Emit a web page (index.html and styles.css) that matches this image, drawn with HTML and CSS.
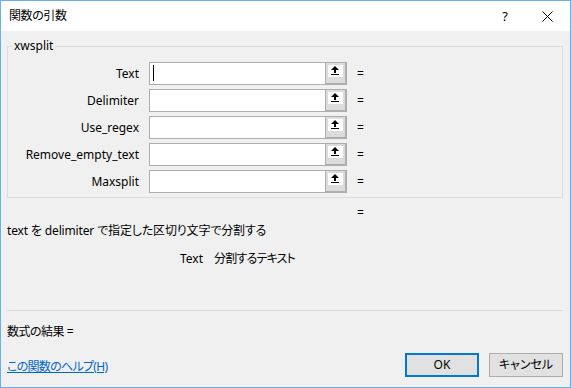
FILE: index.html
```html
<!DOCTYPE html>
<html lang="ja">
<head>
<meta charset="utf-8">
<title>関数の引数</title>
<link rel="stylesheet" href="styles.css">
</head>
<body>
<div class="window">
  <div class="titlebar">
    <span class="title">関数の引数</span>
    <span class="caption-btn help">?</span>
    <span class="caption-btn close">
      <svg width="11" height="11" viewBox="0 0 11 11"><path d="M0.5 0.5 L10.5 10.5 M10.5 0.5 L0.5 10.5" stroke="#000" stroke-width="1" fill="none"/></svg>
    </span>
  </div>
  <div class="content">
    <fieldset class="group">
      <legend class="group-title">xwsplit</legend>
      <div class="args">
        <span class="arg-label">Text</span>
        <div class="field"><span class="input"><span class="caret"></span></span><span class="pick"><span class="pick-face"><svg width="15" height="12" viewBox="0 0 15 12"><polygon points="7,1 11,5 3,5" fill="#000"/><rect x="6" y="5" width="2" height="3" fill="#000"/><rect x="3" y="9" width="8" height="1" fill="#000"/></svg></span></span></div>
        <span class="eq">=</span>

        <span class="arg-label">Delimiter</span>
        <div class="field"><span class="input"></span><span class="pick"><span class="pick-face"><svg width="15" height="12" viewBox="0 0 15 12"><polygon points="7,1 11,5 3,5" fill="#000"/><rect x="6" y="5" width="2" height="3" fill="#000"/><rect x="3" y="9" width="8" height="1" fill="#000"/></svg></span></span></div>
        <span class="eq">=</span>

        <span class="arg-label">Use_regex</span>
        <div class="field"><span class="input"></span><span class="pick"><span class="pick-face"><svg width="15" height="12" viewBox="0 0 15 12"><polygon points="7,1 11,5 3,5" fill="#000"/><rect x="6" y="5" width="2" height="3" fill="#000"/><rect x="3" y="9" width="8" height="1" fill="#000"/></svg></span></span></div>
        <span class="eq">=</span>

        <span class="arg-label">Remove_empty_text</span>
        <div class="field"><span class="input"></span><span class="pick"><span class="pick-face"><svg width="15" height="12" viewBox="0 0 15 12"><polygon points="7,1 11,5 3,5" fill="#000"/><rect x="6" y="5" width="2" height="3" fill="#000"/><rect x="3" y="9" width="8" height="1" fill="#000"/></svg></span></span></div>
        <span class="eq">=</span>

        <span class="arg-label">Maxsplit</span>
        <div class="field"><span class="input"></span><span class="pick"><span class="pick-face"><svg width="15" height="12" viewBox="0 0 15 12"><polygon points="7,1 11,5 3,5" fill="#000"/><rect x="6" y="5" width="2" height="3" fill="#000"/><rect x="3" y="9" width="8" height="1" fill="#000"/></svg></span></span></div>
        <span class="eq">=</span>
      </div>
    </fieldset>
    <div class="result-eq">=</div>
    <p class="desc">text を delimiter で指定した区切り文字で分割する</p>
    <div class="argdesc"><span class="argname">Text</span><span class="argtext">分割するテキスト</span></div>
    <hr class="sep">
    <div class="formula">数式の結果 =</div>
    <div class="footer">
      <a class="help-link" href="#">この関数のヘルプ(H)</a>
      <div class="buttons">
        <button class="btn primary" type="button">OK</button>
        <button class="btn" type="button">キャンセル</button>
      </div>
    </div>
  </div>
</div>
</body>
</html>
```

FILE: styles.css
```css
* { box-sizing: border-box; }
html, body { margin: 0; padding: 0; }
body {
  font-family: "Noto Sans", "Noto Sans CJK JP", sans-serif;
  font-size: 12px;
  line-height: 16px;
  color: #000;
  background: #f0f0f0;
  font-feature-settings: "palt" 1;
}
.window {
  width: 571px;
  height: 388px;
  border: 1px solid #63aff0;
  background: #f0f0f0;
  display: flex;
  flex-direction: column;
}
.titlebar {
  height: 30px;
  background: #fff;
  display: flex;
  align-items: center;
  padding-left: 8px;
}
.title { flex: 1; letter-spacing: -0.4px; }
.caption-btn {
  width: 46px;
  height: 30px;
  display: flex;
  align-items: center;
  justify-content: center;
}
.help { padding-left: 8px; font-size: 13px; }
.close svg { display: block; }
.content {
  flex: 1;
  padding: 0 7px 0 6px;
  display: flex;
  flex-direction: column;
}
.group {
  margin: 7px 0 0 0;
  padding: 8px 0 4px 0;
  border: 1px solid #dcdcdc;
  min-width: 0;
}
.group-title {
  margin-left: 4px;
  padding: 0 2px;
  line-height: 16px;
}
.args {
  display: grid;
  grid-template-columns: 131px 198px auto;
  column-gap: 10px;
  row-gap: 4px;
  align-items: center;
}
.arg-label { text-align: right; white-space: nowrap; }
.field {
  height: 23px;
  border: 1px solid #adadad;
  background: #fff;
  display: flex;
}
.input { flex: 1; position: relative; }
.caret {
  position: absolute;
  left: 3px;
  top: 2px;
  width: 1px;
  height: 16px;
  background: #000;
}
.pick {
  width: 21px;
  border-left: 1px solid #adadad;
  background: #dcdcdc;
  box-shadow: inset -1px -1px 0 #adadad;
  padding: 2px 0 0 2px;
}
.pick-face {
  display: block;
  width: 15px;
  height: 12px;
  background: #fff;
}
.pick-face svg { display: block; }
.result-eq {
  margin-top: 7px;
  padding-left: 350px;
}
.desc { margin: 2px 0 0 0; letter-spacing: -0.15px; }
.argdesc {
  margin-top: 12px;
  padding-left: 173px;
  display: flex;
  gap: 11px;
}
.argtext { letter-spacing: -0.8px; }
.sep {
  margin: 43px 0 0 0;
  border: 0;
  border-top: 1px solid #dadada;
  height: 0;
}
.formula { margin-top: 13px; letter-spacing: -0.5px; }
.footer {
  margin-top: 13px;
  display: flex;
  align-items: center;
  justify-content: space-between;
}
.help-link {
  color: #0066cc;
  text-decoration: underline;
  padding-top: 3px;
  letter-spacing: -0.7px;
}
.buttons { display: flex; gap: 10px; }
.btn {
  width: 74px;
  height: 24px;
  background: #e1e1e1;
  border: 1px solid #adadad;
  font: inherit;
  color: #000;
  padding: 0;
}
.btn.primary { border: 2px solid #0078d7; }
```
